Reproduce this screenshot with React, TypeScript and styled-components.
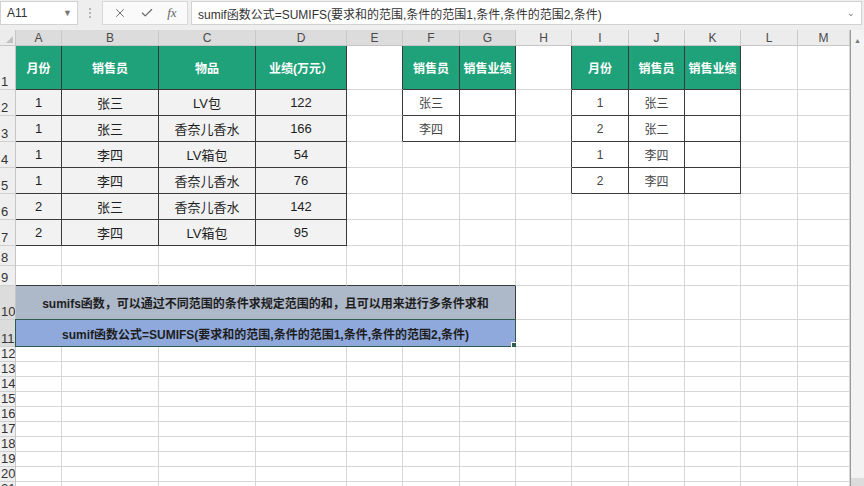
import React from 'react';
import styled, { createGlobalStyle } from 'styled-components';
import { X, Check } from 'lucide-react';

const GlobalStyle = createGlobalStyle`
  html, body { margin: 0; padding: 0; background: #fff; overflow: hidden; }
  body { font-family: "Liberation Sans", "Noto Sans CJK SC", sans-serif; }
`;

const COLS = ['A', 'B', 'C', 'D', 'E', 'F', 'G', 'H', 'I', 'J', 'K', 'L', 'M'];
const COL_W = [46, 97, 97, 91, 56, 57, 56, 56, 57, 56, 56, 57, 52];
const ROW_H = [44, 26, 26, 26, 26, 26, 26, 20, 20, 34, 27, 15, 15, 15, 15, 15, 15, 15, 15, 15, 15];

const GRID = '#d6d6d6';
const DARK = '#3a3a3a';
const GREEN = '#1fa27a';

type Kind = 'head' | 'gray' | 'white' | 'note' | 'formula';
type CellData = { text: string; kind: Kind; span?: number; light?: boolean };

// 工作表内容
const cells: Record<string, CellData> = {};
const put = (r: number, c: number, text: string, kind: Kind, extra: Partial<CellData> = {}) => {
  cells[`${r},${c}`] = { text, kind, ...extra };
};

['月份', '销售员', '物品', '业绩(万元）'].forEach((t, c) => put(1, c, t, 'head'));
[
  ['1', '张三', 'LV包', '122'],
  ['1', '张三', '香奈儿香水', '166'],
  ['1', '李四', 'LV箱包', '54'],
  ['1', '李四', '香奈儿香水', '76'],
  ['2', '张三', '香奈儿香水', '142'],
  ['2', '李四', 'LV箱包', '95'],
].forEach((row, i) => row.forEach((t, c) => put(i + 2, c, t, 'gray')));

['销售员', '销售业绩'].forEach((t, i) => put(1, 5 + i, t, 'head'));
[['张三', ''], ['李四', '']].forEach((row, i) =>
  row.forEach((t, j) => put(i + 2, 5 + j, t, 'white', { light: true })));

['月份', '销售员', '销售业绩'].forEach((t, i) => put(1, 8 + i, t, 'head'));
[['1', '张三', ''], ['2', '张二', ''], ['1', '李四', ''], ['2', '李四', '']].forEach((row, i) =>
  row.forEach((t, j) => put(i + 2, 8 + j, t, 'white', { light: true })));

put(10, 0, 'sumifs函数，可以通过不同范围的条件求规定范围的和，且可以用来进行多条件求和', 'note', { span: 7 });
put(11, 0, 'sumif函数公式=SUMIFS(要求和的范围,条件的范围1,条件,条件的范围2,条件)', 'formula', { span: 7 });

const inBlock = (r: number, c: number) => {
  if (r >= 1 && r <= 7 && c >= 0 && c <= 3) return true;
  if (r >= 1 && r <= 3 && c >= 5 && c <= 6) return true;
  if (r >= 1 && r <= 5 && c >= 8 && c <= 10) return true;
  if ((r === 10 || r === 11) && c >= 0 && c <= 6) return true;
  return false;
};

const BG: Record<Kind, string> = {
  head: GREEN,
  gray: '#f2f2f2',
  white: '#ffffff',
  note: '#adb8c9',
  formula: '#8fa9dc',
};

const Frame = styled.div`
  width: 864px;
  height: 486px;
  overflow: hidden;
  background: #fff;
`;

const FormulaBar = styled.div`
  height: 30px;
  box-sizing: border-box;
  padding: 1px 2px 5px 0;
  background: #eeeeee;
  display: flex;
  align-items: stretch;
  gap: 0;
`;

const NameBox = styled.div`
  width: 78px;
  box-sizing: border-box;
  background: #fff;
  border: 1px solid #d2d2d2;
  display: flex;
  align-items: center;
  justify-content: space-between;
  padding: 0 5px 0 6px;
  font-size: 12px;
  color: #333;
`;

const Caret = styled.span`
  font-size: 9px;
  color: #777;
`;

const Grip = styled.div`
  width: 24px;
  display: flex;
  flex-direction: column;
  align-items: center;
  justify-content: center;
  gap: 2px;
  & > i {
    width: 2px;
    height: 2px;
    background: #b5b5b5;
    display: block;
  }
`;

const ButtonBox = styled.div`
  width: 86px;
  box-sizing: border-box;
  background: #fafafa;
  border: 1px solid #d8d8d8;
  display: flex;
  align-items: center;
  justify-content: space-around;
  padding: 0 4px;
  color: #666;
  margin-right: 3px;
`;

const Fx = styled.span`
  font-family: "Liberation Serif", serif;
  font-style: italic;
  font-size: 13px;
  color: #666;
`;

const FormulaInput = styled.div`
  flex: 1;
  box-sizing: border-box;
  background: #fff;
  border: 1px solid #d2d2d2;
  display: flex;
  align-items: center;
  justify-content: space-between;
  padding: 0 6px 0 6px;
  font-size: 12px;
  color: #333;
  white-space: nowrap;
`;

const Body = styled.div`
  display: flex;
`;

const Sheet = styled.div`
  width: 850px;
  display: grid;
  grid-template-columns: 16px ${COL_W.map((w) => `${w}px`).join(' ')};
  grid-template-rows: 16px ${ROW_H.map((h) => `${h}px`).join(' ')};
`;

const Corner = styled.div`
  box-sizing: border-box;
  background: #ececec;
  border-right: 1px solid #c6c6c6;
  border-bottom: 1px solid #c6c6c6;
  position: relative;
  &::after {
    content: '';
    position: absolute;
    right: 2px;
    bottom: 2px;
    border-left: 7px solid transparent;
    border-bottom: 7px solid #c2c2c2;
  }
`;

const ColHead = styled.div<{ $sel: boolean }>`
  box-sizing: border-box;
  background: ${(p) => (p.$sel ? '#dcdcdc' : '#ececec')};
  border-right: 1px solid #c9c9c9;
  border-bottom: 1px solid #c6c6c6;
  display: flex;
  align-items: center;
  justify-content: center;
  font-size: 12px;
  color: #4a4a4a;
`;

const RowHead = styled.div<{ $sel: boolean }>`
  box-sizing: border-box;
  background: ${(p) => (p.$sel ? '#dcdcdc' : '#efefef')};
  border-right: 1px solid #c6c6c6;
  border-bottom: 1px solid #d0d0d0;
  display: flex;
  align-items: flex-end;
  padding: 0 0 0 1px;
  font-size: 13px;
  line-height: 14px;
  color: #333;
  overflow: hidden;
`;

const Cell = styled.div<{
  $span: number;
  $bg: string;
  $rb: string;
  $bb: string;
  $kind?: Kind;
  $light?: boolean;
}>`
  box-sizing: border-box;
  grid-column: span ${(p) => p.$span};
  background: ${(p) => p.$bg};
  border-right: 1px solid ${(p) => p.$rb};
  border-bottom: 1px solid ${(p) => p.$bb};
  display: flex;
  align-items: center;
  justify-content: center;
  white-space: nowrap;
  overflow: visible;
  position: relative;
  font-size: ${(p) => (p.$kind === 'gray' ? 13 : 12)}px;
  font-weight: ${(p) => (p.$kind === 'head' || p.$kind === 'note' || p.$kind === 'formula' ? 700 : 400)};
  color: ${(p) => (p.$kind === 'head' ? '#fff' : p.$light ? '#444' : '#1e1e1e')};
`;

const Selection = styled.div`
  position: absolute;
  inset: -1px -1px -1px -1px;
  border: 1px solid #2e5b4d;
  pointer-events: none;
  &::after {
    content: '';
    position: absolute;
    right: -3px;
    bottom: -3px;
    width: 5px;
    height: 5px;
    background: #2e5b4d;
    border: 1px solid #fff;
  }
`;

const Scrollbar = styled.div`
  width: 14px;
  box-sizing: border-box;
  border-left: 1px solid #9a9a9a;
  background: #f3f3f3;
  height: 456px;
  display: flex;
  flex-direction: column;
  justify-content: space-between;
`;

const ScrollBtn = styled.div`
  height: 16px;
  display: flex;
  align-items: center;
  justify-content: center;
  font-size: 7px;
  color: #777;
  margin-top: 2px;
`;

const ScrollEnd = styled.div`
  height: 8px;
  background: #dcdcdc;
`;

function renderRow(r: number) {
  const out: React.ReactNode[] = [];
  out.push(
    <RowHead key={`h${r}`} $sel={r === 10 || r === 11}>
      {r}
    </RowHead>,
  );
  let c = 0;
  while (c < COLS.length) {
    const data = cells[`${r},${c}`];
    const span = data?.span ?? 1;
    const last = c + span - 1;
    const dark = inBlock(r, c);
    const rb = dark || inBlock(r, last + 1) ? DARK : GRID;
    const bb = dark || inBlock(r + 1, c) ? DARK : GRID;
    out.push(
      <Cell
        key={`${r},${c}`}
        $span={span}
        $bg={data ? BG[data.kind] : '#fff'}
        $rb={rb}
        $bb={bb}
        $kind={data?.kind}
        $light={data?.light}
      >
        {data?.text}
        {data?.kind === 'formula' && <Selection />}
      </Cell>,
    );
    c += span;
  }
  return out;
}

export default function App() {
  return (
    <Frame>
      <GlobalStyle />
      <FormulaBar>
        <NameBox>
          A11
          <Caret>▼</Caret>
        </NameBox>
        <Grip>
          <i />
          <i />
          <i />
        </Grip>
        <ButtonBox>
          <X size={14} strokeWidth={1.6} />
          <Check size={14} strokeWidth={2} />
          <Fx>fx</Fx>
        </ButtonBox>
        <FormulaInput>
          sumif函数公式=SUMIFS(要求和的范围,条件的范围1,条件,条件的范围2,条件)
          <Caret>⌄</Caret>
        </FormulaInput>
      </FormulaBar>
      <Body>
        <Sheet>
          <Corner />
          {COLS.map((l, i) => (
            <ColHead key={l} $sel={i <= 6}>
              {l}
            </ColHead>
          ))}
          {ROW_H.map((_, i) => renderRow(i + 1))}
        </Sheet>
        <Scrollbar>
          <ScrollBtn>▲</ScrollBtn>
          <ScrollEnd />
        </Scrollbar>
      </Body>
    </Frame>
  );
}
